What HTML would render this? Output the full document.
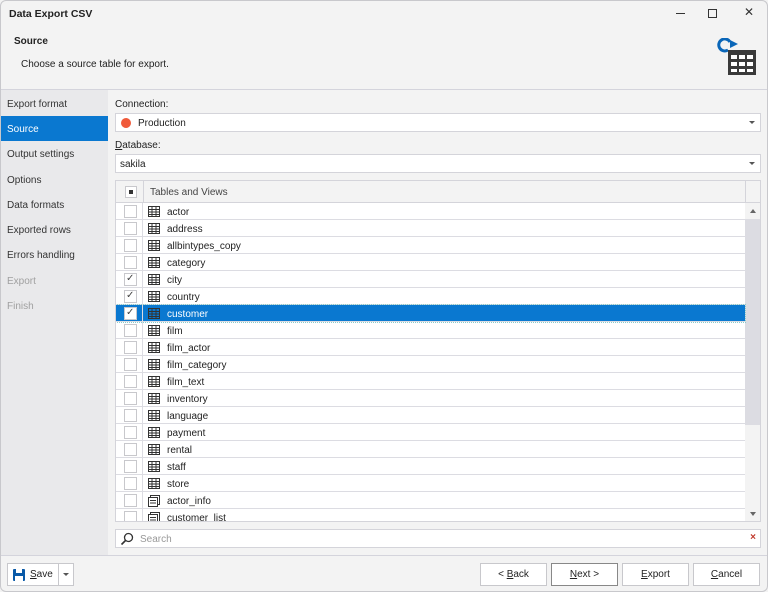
<!DOCTYPE html>
<html><head><style>
*{box-sizing:border-box;margin:0;padding:0}
body{width:768px;height:592px;background:#fff;font-family:"Liberation Sans",sans-serif;font-size:10px;color:#222;position:relative;overflow:hidden}
.win{position:absolute;left:0;top:0;width:768px;height:592px;background:#f3f3f3;overflow:hidden}
.frame{position:absolute;left:0;top:0;width:768px;height:592px;border:1px solid #c8c8cc;border-radius:6px;pointer-events:none}
.a{position:absolute}
.nav{left:0;top:90px;width:108px;height:465px;background:#e9e9eb}
.ni{position:absolute;left:7px;font-size:10px;color:#333}
.grid{left:115px;top:180px;width:646px;height:342px;border:1px solid #d4d4da;background:#fff;overflow:hidden}
.row{position:absolute;left:0;width:629px;height:17px;border-bottom:1px solid #dcdce2}
.cb{position:absolute;left:8px;top:2px;width:13px;height:13px;border:1px solid #c8c8cc;background:#fff}
.cc{position:absolute;left:26px;top:0;width:1px;height:17px;background:#dcdce2}
.nm{position:absolute;left:51px;top:4px;font-size:10px}
.ic{position:absolute;left:32px;top:3px}
.btn{position:absolute;top:563px;height:23px;width:67px;border:1px solid #c8c8cc;background:#fff;text-align:center;line-height:22px;font-size:10px}
.dd{position:absolute;width:646px;height:19px;border:1px solid #d4d4da;background:#fff}
.arr{position:absolute;right:5px;top:7px;width:0;height:0;border-left:3px solid transparent;border-right:3px solid transparent;border-top:3px solid #555}
</style></head><body><div class="win">
<div class="a" style="left:9px;top:8px;font-weight:bold;font-size:10.5px">Data Export CSV</div>
<div class="a" style="left:676px;top:13px;width:9px;height:1px;background:#333"></div>
<div class="a" style="left:708px;top:9px;width:9px;height:9px;border:1px solid #333"></div>
<div class="a" style="left:744px;top:5px;font-size:12px;color:#333">✕</div>
<div class="a" style="left:14px;top:36px;font-weight:bold">Source</div>
<div class="a" style="left:21px;top:59px">Choose a source table for export.</div>
<svg class="a" style="left:716px;top:38px" width="40" height="38"><path d="M12 12 A6 6 0 1 1 14 4" stroke="#0a66b8" stroke-width="3" fill="none"/><path d="M14 2 L22 6 L14 10Z" fill="#0a66b8"/><rect x="12" y="12" width="28" height="25" fill="#3a3a3a"/><g fill="#fff"><rect x="15" y="17" width="6" height="4"/><rect x="23" y="17" width="6" height="4"/><rect x="31" y="17" width="6" height="4"/><rect x="15" y="24" width="6" height="4"/><rect x="23" y="24" width="6" height="4"/><rect x="31" y="24" width="6" height="4"/><rect x="15" y="31" width="6" height="3"/><rect x="23" y="31" width="6" height="3"/><rect x="31" y="31" width="6" height="3"/></g></svg>
<div class="a" style="left:0;top:89px;width:768px;height:1px;background:#d4d4dc"></div>
<div class="a nav">
<div class="ni" style="top:9px">Export format</div>
<div style="position:absolute;left:1px;top:26px;width:107px;height:25px;background:#0a78d0"></div>
<div class="ni" style="top:34px;color:#fff">Source</div>
<div class="ni" style="top:59px">Output settings</div>
<div class="ni" style="top:85px">Options</div>
<div class="ni" style="top:110px">Data formats</div>
<div class="ni" style="top:135px">Exported rows</div>
<div class="ni" style="top:160px">Errors handling</div>
<div class="ni" style="top:186px;color:#a0a0a0">Export</div>
<div class="ni" style="top:211px;color:#a0a0a0">Finish</div>
</div>
<div class="a" style="left:115px;top:99px">Connection:</div>
<div class="dd" style="left:115px;top:113px"><div class="a" style="left:5px;top:4px;width:10px;height:10px;border-radius:50%;background:#f05a3a"></div><div class="a" style="left:22px;top:4px">Production</div><div class="arr"></div></div>
<div class="a" style="left:115px;top:140px"><u>D</u>atabase:</div>
<div class="dd" style="left:115px;top:154px"><div class="a" style="left:4px;top:4px">sakila</div><div class="arr"></div></div>
<div class="a grid">
<div class="a" style="left:0;top:0;width:646px;height:22px;background:#f3f3f3;border-bottom:1px solid #d4d4da"></div>
<div class="a" style="left:9px;top:5px;width:12px;height:12px;border:1px solid #c8c8cc;background:#fff"><div class="a" style="left:3px;top:3px;width:4px;height:4px;background:#333"></div></div>
<div class="a" style="left:27px;top:0;width:1px;height:22px;background:#d4d4da"></div>
<div class="a" style="left:34px;top:6px;color:#444">Tables and Views</div>
<div class="a" style="left:629px;top:0;width:1px;height:22px;background:#d4d4da"></div>
<div class="a" style="left:629px;top:22px;width:16px;height:320px;background:#f3f3f3"></div>
<div class="a" style="left:629px;top:38px;width:16px;height:206px;background:#dcdce2"></div>
<div class="a" style="left:634px;top:28px;border-left:3px solid transparent;border-right:3px solid transparent;border-bottom:4px solid #666"></div>
<div class="a" style="left:634px;top:331px;border-left:3px solid transparent;border-right:3px solid transparent;border-top:4px solid #666"></div>
<div id="rows"></div>
</div>
<div class="a" style="left:115px;top:529px;width:646px;height:19px;border:1px solid #d4d4da;background:#fff"><svg class="a" style="left:4px;top:2px" width="14" height="14"><circle cx="8.5" cy="5.5" r="4" stroke="#333" stroke-width="1.3" fill="none"/><path d="M5.5 8.5L1.5 12.5" stroke="#333" stroke-width="1.6"/></svg><div class="a" style="left:24px;top:4px;color:#999">Search</div><div class="a" style="right:4px;top:2px;color:#c0392b;font-weight:bold">×</div></div>
<div class="a" style="left:0;top:555px;width:768px;height:1px;background:#d4d4dc"></div>
<div class="a" style="left:0;top:556px;width:768px;height:36px;background:#f3f3f3"></div>
<div class="btn" style="left:7px;width:67px;text-align:left"><svg class="a" style="left:5px;top:5px" width="12" height="12"><rect width="12" height="12" rx="1" fill="#0a5aa8"/><rect x="3" y="0" width="6" height="4" fill="#fff"/><rect x="2" y="7" width="8" height="5" fill="#fff"/></svg><span class="a" style="left:22px;top:0"><u>S</u>ave</span><div class="a" style="left:50px;top:0;width:1px;height:21px;background:#c8c8cc"></div><div class="a" style="left:55px;top:9px;border-left:3px solid transparent;border-right:3px solid transparent;border-top:3px solid #555"></div></div>
<div class="btn" style="left:480px">&lt; <u>B</u>ack</div>
<div class="btn" style="left:551px;border-color:#888"><u>N</u>ext &gt;</div>
<div class="btn" style="left:622px"><u>E</u>xport</div>
<div class="btn" style="left:693px"><u>C</u>ancel</div>
</div>
<div class="frame"></div>
<script>
var n=["actor","address","allbintypes_copy","category","city","country","customer","film","film_actor","film_category","film_text","inventory","language","payment","rental","staff","store","actor_info","customer_list"];
var h="";
var tbl='<svg class="ic" width="12" height="11"><rect x=".5" y=".5" width="11" height="10" fill="none" stroke="#333"/><path d="M0 3.5H12M0 6H12M0 8.5H12M4 1V11M8 1V11" stroke="#333" stroke-width="1"/></svg>';
var vw='<svg class="ic" width="12" height="12"><rect x="2.5" y=".5" width="9" height="9" fill="#fff" stroke="#333"/><rect x=".5" y="2.5" width="9" height="9" fill="#fff" stroke="#333"/><path d="M2 5.5H8M2 8H8" stroke="#333"/></svg>';
n.forEach(function(s,i){var sel=i==6;var ck=i>=4&&i<=6;
h+='<div class="row" style="top:'+(22+i*17)+'px;'+(sel?'background:#0a78d0;outline:1px dotted #8cc;':'')+'"><div class="cb">'+(ck?'<span style="position:absolute;left:1px;top:-1px;font-size:10px;color:#444">✓</span>':'')+'</div><div class="cc"></div>'+(i>=17?vw:tbl)+'<div class="nm" style="'+(sel?'color:#fff':'')+'">'+s+'</div></div>';});
document.getElementById("rows").innerHTML=h;
</script>
</body></html>
